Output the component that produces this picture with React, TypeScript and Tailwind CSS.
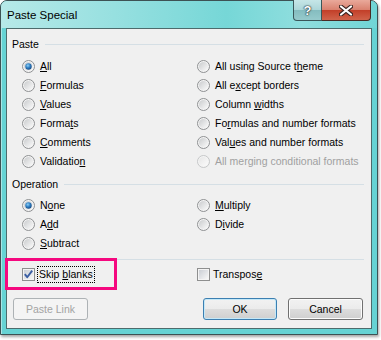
import React, { useId } from 'react'

const font = "font-['Liberation_Sans',Arial,sans-serif]"

type Opt = { t: string; u?: number; checked?: boolean; disabled?: boolean }

const Label = ({ t, u, disabled }: Opt) => {
  const cls = disabled ? 'text-[#a0a0a0]' : 'text-black'
  if (u === undefined) return <span className={`${cls} whitespace-nowrap`}>{t}</span>
  return (
    <span className={`${cls} whitespace-nowrap`}>
      {t.slice(0, u)}
      <span className="underline underline-offset-[1px]">{t[u]}</span>
      {t.slice(u + 1)}
    </span>
  )
}

const Radio = ({ checked, disabled }: { checked?: boolean; disabled?: boolean }) => {
  const id = useId().replace(/:/g, '')
  return (
    <svg width="13" height="13" viewBox="0 0 13 13" className="shrink-0">
      <defs>
        <linearGradient id={`in${id}`} x1="0" y1="0" x2="1" y2="1">
          <stop offset="0" stopColor={disabled ? '#e6e6e6' : '#c9cbcd'} />
          <stop offset="1" stopColor="#fbfbfb" />
        </linearGradient>
        <radialGradient id={`dot${id}`} cx="0.4" cy="0.35" r="0.7">
          <stop offset="0" stopColor="#8fd0f5" />
          <stop offset="0.5" stopColor="#2f7fc4" />
          <stop offset="1" stopColor="#17467c" />
        </radialGradient>
      </defs>
      <circle cx="6.5" cy="6.5" r="6" fill="#f4f4f4" stroke={disabled ? '#c5c7c8' : '#8e9092'} />
      <circle cx="6.5" cy="6.5" r="4.6" fill={`url(#in${id})`} />
      {checked && <circle cx="6.5" cy="6.5" r="3.2" fill={`url(#dot${id})`} />}
    </svg>
  )
}

const Check = ({ checked }: { checked?: boolean }) => (
  <svg width="13" height="13" viewBox="0 0 13 13" className="shrink-0">
    <defs>
      <linearGradient id="cbin" x1="0" y1="0" x2="1" y2="1">
        <stop offset="0" stopColor="#cbcfd5" />
        <stop offset="1" stopColor="#f7f7f7" />
      </linearGradient>
    </defs>
    <rect x="0.5" y="0.5" width="12" height="12" fill="#f4f4f4" stroke="#8e8f8f" />
    <rect x="2" y="2" width="9" height="9" fill="url(#cbin)" />
    {checked && (
      <path d="M2.8 6.2 L5.2 9.2 L10.2 2.6" fill="none" stroke="#3a5ea3" strokeWidth="1.9" strokeLinejoin="round" />
    )}
  </svg>
)

const RadioRow = (o: Opt) => (
  <div className="flex h-[19px] items-center gap-[5px]">
    <Radio checked={o.checked} disabled={o.disabled} />
    <Label {...o} />
  </div>
)

const Header = ({ t }: { t: string }) => (
  <div className="flex h-[14px] items-center gap-[6px]">
    <span>{t}</span>
    <div className="h-px flex-1 bg-[#d5dfe5]" />
  </div>
)

const paste: Opt[] = [
  { t: 'All', u: 0, checked: true },
  { t: 'All using Source theme', u: 18 },
  { t: 'Formulas', u: 0 },
  { t: 'All except borders', u: 5 },
  { t: 'Values', u: 0 },
  { t: 'Column widths', u: 7 },
  { t: 'Formats', u: 5 },
  { t: 'Formulas and number formats', u: 2 },
  { t: 'Comments', u: 0 },
  { t: 'Values and number formats', u: 3 },
  { t: 'Validation', u: 9 },
  { t: 'All merging conditional formats', disabled: true },
]

const ops: (Opt | null)[] = [
  { t: 'None', u: 1, checked: true },
  { t: 'Multiply', u: 0 },
  { t: 'Add', u: 1 },
  { t: 'Divide', u: 1 },
  { t: 'Subtract', u: 0 },
  null,
]

const btn =
  'flex h-[22px] items-center justify-center rounded-[3px] border bg-[linear-gradient(#f2f2f2_0%,#ebebeb_50%,#dddddd_50%,#cfcfcf_100%)]'

export default function App() {
  return (
    <div className={`${font} h-[340px] w-[381px] bg-white text-[10.5px] leading-none`}>
      <div className="flex h-[335px] w-[378px] flex-col rounded-t-[7px] border border-[#3d5254] bg-[#66d3d4] shadow-[1px_2px_3px_rgba(0,0,0,0.35),inset_1px_0_0_#a8e6e6]">
        {/* title bar */}
        <div className="flex h-[27px] shrink-0 items-start rounded-t-[6px] bg-[linear-gradient(90deg,#b6e9e8_0%,#97e0e0_30%,#76d7d7_60%,#8fdede_80%,#70d5d6_100%)] pl-[6px] pr-[6px]">
          <span className="mt-[9px] text-[11.5px] text-black">Paste Special</span>
          <div className="-mt-px ml-auto flex">
            <div className="flex h-[21px] w-[29px] items-center justify-center rounded-bl-[4px] border border-t-0 border-[#3a5659] bg-[linear-gradient(#c6e6e7_0%,#acd6d8_50%,#84bcbf_50%,#96cacc_100%)]">
              <span className="text-[13px] font-bold text-white [text-shadow:0_0_1px_#243b3d,0_0_1px_#243b3d,0_0_2px_#243b3d]">?</span>
            </div>
            <div className="flex h-[21px] w-[49px] items-center justify-center rounded-br-[4px] border border-l-0 border-t-0 border-[#4a2a24] bg-[linear-gradient(#e9a99b_0%,#d9806e_50%,#c23e28_50%,#d0634b_100%)]">
              <svg width="14" height="11" viewBox="0 0 14 11">
                <path d="M2 1.5 L12 9.5 M12 1.5 L2 9.5" stroke="#3a2320" strokeWidth="4.2" strokeLinecap="round" />
                <path d="M2 1.5 L12 9.5 M12 1.5 L2 9.5" stroke="#ffffff" strokeWidth="2.2" strokeLinecap="round" />
              </svg>
            </div>
          </div>
        </div>

        {/* client area */}
        <div className="mx-[5px] flex h-[301px] flex-col border border-[#4d6b6c] bg-[#f0f0f0] pb-[7px] pl-[5px] pr-[7px] pt-[8px]">
          <Header t="Paste" />
          <div className="mt-[6px] grid grid-cols-[175px_1fr] pl-[10px]">
            {paste.map((o) => (
              <RadioRow key={o.t} {...o} />
            ))}
          </div>

          <div className="mt-[6px]">
            <Header t="Operation" />
          </div>
          <div className="mt-[5px] grid grid-cols-[175px_1fr] pl-[10px]">
            {ops.map((o, i) => (o ? <RadioRow key={o.t} {...o} /> : <div key={i} className="h-[19px]" />))}
          </div>

          <div className="mt-[6px] h-px bg-[#d5dfe5]" />

          <div className="mt-[5px] grid grid-cols-[175px_1fr] pl-[10px]">
            <div className="relative flex h-[19px] items-center gap-[2px]">
              <Check checked />
              <span className="border border-dotted border-black px-px py-[2px]">
                <Label t="Skip blanks" u={5} />
              </span>
              <div className="absolute left-[-17px] top-[-7px] h-[32px] w-[112px] border-[3px] border-[#f5087f]" />
            </div>
            <div className="flex h-[19px] items-center gap-[3px]">
              <Check />
              <Label t="Transpose" u={8} />
            </div>
          </div>

          <div className="mt-[14px] flex pl-px pr-px">
            <div className="flex h-[22px] w-[75px] items-center justify-center rounded-[3px] border border-[#adb2b5] bg-[#f4f4f4] text-[#a3a3a3]">
              Paste Link
            </div>
            <div className={`${btn} ml-auto w-[74px] border-[#3c7fb1] shadow-[inset_0_0_0_1px_#c4e8f8]`}>OK</div>
            <div className={`${btn} ml-[11px] w-[75px] border-[#707070] shadow-[inset_0_0_0_1px_#fcfcfc]`}>Cancel</div>
          </div>
        </div>
      </div>
    </div>
  )
}
